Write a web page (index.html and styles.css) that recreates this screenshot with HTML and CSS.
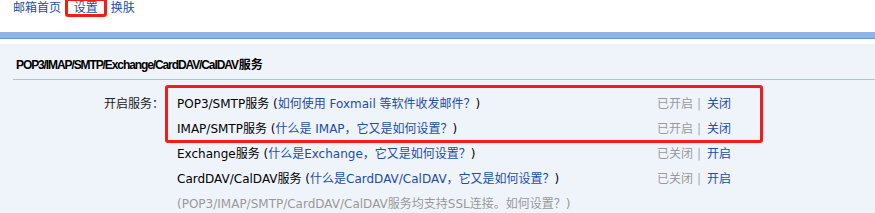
FILE: index.html
```html
<!DOCTYPE html>
<html lang="zh-CN">
<head>
  <meta charset="UTF-8">
  <title>设置 - POP3/IMAP/SMTP/Exchange/CardDAV/CalDAV服务</title>
  <link rel="stylesheet" href="styles.css">
</head>
<body>
  <div class="topnav">
    <a href="#">邮箱首页</a>
    <a href="#" class="mark">设置</a>
    <a href="#">换肤</a>
  </div>
  <div class="topbar"></div>

  <div class="main">
    <div class="title">POP3/IMAP/SMTP/Exchange/CardDAV/CalDAV<span class="cjk">服务</span></div>

    <div class="form">
      <div class="label">开启服务：</div>
      <div class="services">
        <div class="group mark">
          <div class="row">
            <span class="svc">POP3/SMTP服务 (<a href="#">如何使用 Foxmail 等软件收发邮件？</a>)</span>
            <span class="status">已开启<i>|</i><a href="#">关闭</a></span>
          </div>
          <div class="row">
            <span class="svc">IMAP/SMTP服务 (<a href="#">什么是 IMAP，它又是如何设置？</a>)</span>
            <span class="status">已开启<i>|</i><a href="#">关闭</a></span>
          </div>
        </div>
        <div class="row">
          <span class="svc">Exchange服务 (<a href="#">什么是Exchange，它又是如何设置？</a>)</span>
          <span class="status">已关闭<i>|</i><a href="#">开启</a></span>
        </div>
        <div class="row">
          <span class="svc">CardDAV/CalDAV服务 (<a href="#">什么是CardDAV/CalDAV，它又是如何设置？</a>)</span>
          <span class="status">已关闭<i>|</i><a href="#">开启</a></span>
        </div>
        <div class="row hint">(POP3/IMAP/SMTP/CardDAV/CalDAV服务均支持SSL连接。如何设置？)</div>
      </div>
    </div>
  </div>
</body>
</html>
```

FILE: styles.css
```css
body {
  margin: 0;
  font-family: "DejaVu Sans", "Noto Sans CJK SC", sans-serif;
  font-size: 12px;
  color: #000;
  background: #fff;
}

a {
  color: #1e4e9c;
  text-decoration: none;
}

.topnav {
  height: 32px;
  padding-left: 13px;
  line-height: 16px;
}

.topnav a {
  margin-right: 9px;
}

.mark {
  position: relative;
}

.mark::after {
  content: '';
  position: absolute;
  border: 3px solid #f41c16;
  border-radius: 3px;
  pointer-events: none;
}

.topnav .mark::after {
  left: -9px;
  right: -9px;
  top: -3px;
  bottom: -2px;
}

.topbar {
  height: 6px;
  background: #8cb5ea;
  border-bottom: 1px solid #6897d6;
  margin-bottom: 5px;
}

.main {
  background: #eff4fb;
  padding-top: 11px;
  height: 158px;
}

.title {
  margin-left: 13px;
  padding-left: 3px;
  line-height: 21px;
  padding-bottom: 3px;
  border-bottom: 1px solid #a9c4e8;
  font-family: "Liberation Sans", "Noto Sans CJK SC", sans-serif;
  font-weight: bold;
  font-size: 12px;
  letter-spacing: -1.1px;
}

.title .cjk {
  font-size: 12px;
  letter-spacing: 0;
  margin-left: 1px;
}

.form {
  display: flex;
  margin-top: 12px;
}

.label {
  width: 164px;
  text-align: right;
  line-height: 25px;
  color: #222;
}

.services {
  padding-left: 13px;
  width: 556px;
}

.row {
  display: flex;
  justify-content: space-between;
  line-height: 25px;
  height: 25px;
}

.group.mark::after {
  left: -12px;
  right: -30px;
  top: -7px;
  bottom: -1px;
}

.status {
  color: #999;
  margin-right: 2px;
}

.status i {
  font-style: normal;
  color: #aaa;
  margin: 0 6px 0 4px;
}

.hint {
  color: #999;
}
```
